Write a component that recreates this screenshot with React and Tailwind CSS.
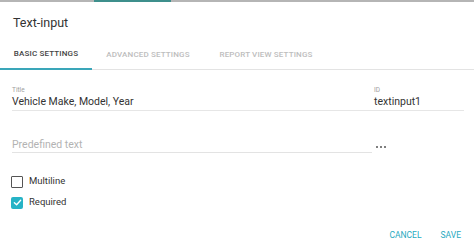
import React from 'react';

const font = { fontFamily: 'Roboto, "Noto Sans", sans-serif' };

const Checkbox = ({ checked, label }) => (
  <div className="flex items-center gap-[6px] h-[21px]">
    {checked ? (
      <div className="w-[12px] h-[12px] rounded-[2px] bg-[#26b3c6] flex items-center justify-center">
        <svg width="9" height="9" viewBox="0 0 10 10" fill="none">
          <path d="M1.5 5.2 L4 7.5 L8.5 2.5" stroke="#fff" strokeWidth="1.5" strokeLinecap="round" strokeLinejoin="round" />
        </svg>
      </div>
    ) : (
      <div className="w-[12px] h-[12px] rounded-[1px] border-[1.5px] border-[#555]" />
    )}
    <span className="text-[9.5px] text-[#333]">{label}</span>
  </div>
);

export default function App() {
  return (
    <div className="w-[474px] h-[252px] bg-white relative overflow-hidden" style={font}>
      <div className="h-[2px] bg-[#b5b5b5] flex">
        <div className="ml-[94px] w-[77px] h-full bg-[#3d8f8c]" />
      </div>
      <div className="px-[13px] pt-[12px] h-[36px] text-[12.5px] text-[#333]">Text-input</div>
      <div className="flex border-b border-[#e3e3e3] h-[32px] text-[8px] font-medium tracking-[0.15px]">
        <div className="w-[92px] flex items-center justify-center pt-[2px] text-[#444] border-b-2 border-[#3aa6b9] mb-[-1px]">BASIC SETTINGS</div>
        <div className="w-[112px] flex items-center justify-center pt-[2px] text-[#bdbdbd]">ADVANCED SETTINGS</div>
        <div className="w-[124px] flex items-center justify-center pt-[2px] text-[#bdbdbd]">REPORT VIEW SETTINGS</div>
      </div>
      <div className="flex pl-[12px] pt-[16px]">
        <div className="w-[348px] border-b border-[#e6e6e6] pb-[1px]">
          <div className="text-[6.5px] text-[#9e9e9e] leading-[9px]">Title</div>
          <div className="text-[10.5px] text-[#333] leading-[14px]">Vehicle Make, Model, Year</div>
        </div>
        <div className="w-[104px] border-b border-[#e6e6e6] pb-[1px] pl-[14px]">
          <div className="text-[6.5px] text-[#9e9e9e] leading-[9px]">ID</div>
          <div className="text-[10.5px] text-[#333] leading-[14px]">textinput1</div>
        </div>
      </div>
      <div className="flex pl-[12px] pt-[27px] items-end">
        <div className="w-[360px] border-b border-[#e3e3e3] text-[10.5px] text-[#b3b3b3] leading-[14px]">Predefined text</div>
        <div className="ml-[4px] flex gap-[2px] mb-[5px]">
          <span className="w-[2px] h-[2px] rounded-full bg-[#555]" />
          <span className="w-[2px] h-[2px] rounded-full bg-[#555]" />
          <span className="w-[2px] h-[2px] rounded-full bg-[#555]" />
        </div>
      </div>
      <div className="pl-[11px] pt-[18px] flex flex-col">
        <Checkbox label="Multiline" />
        <Checkbox checked label="Required" />
      </div>
      <div className="absolute right-[13px] bottom-[10px] flex gap-[19px] text-[8.5px] text-[#26a9c0]">
        <span>CANCEL</span>
        <span>SAVE</span>
      </div>
    </div>
  );
}
